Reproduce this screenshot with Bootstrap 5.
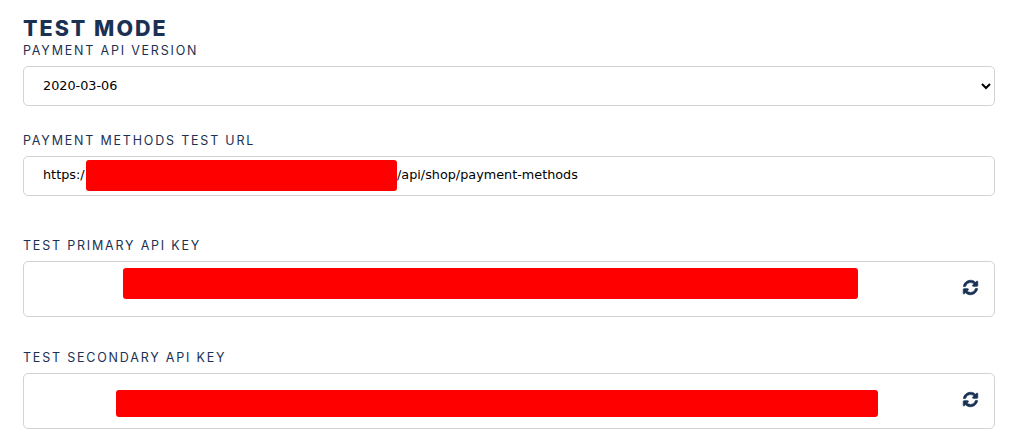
<!DOCTYPE html>
<html lang="en">
<head>
<meta charset="utf-8">
<title>Test mode</title>
<link href="https://cdn.jsdelivr.net/npm/bootstrap@5.3.0/dist/css/bootstrap.min.css" rel="stylesheet">
<style>
body { background:#fff; font-family:"DejaVu Sans",sans-serif; overflow:hidden; }
.page-wrap { padding:16px 29px 0 23px; }
.mode-title { font-family:"Inter",sans-serif; font-weight:800; font-size:21.500px; line-height:24px; letter-spacing:2px; color:#1b3154; margin:0; }
.field-label { display:block; font-family:"Inter",sans-serif; font-size:12.500px; line-height:18px; letter-spacing:1.800px; color:#1b3154; margin:0 0 6px; }
.field-box { position:relative; height:40px; border:1px solid #d3d3d3; border-radius:5px; padding:0 19px; font-size:12.800px; color:#000; background-color:#fff; box-shadow:none; }
.field-box.form-select { appearance:auto; -webkit-appearance:auto; background-image:none; padding:0 0 2px 15px; }
.field-input { line-height:36px; }
.key-box { height:56px; padding-right:16px; }
.key-icon { color:#1b3154; margin-bottom:3px; stroke:currentColor; stroke-width:24; overflow:visible; }
.mask { position:absolute; background:#f00; border-radius:3px; }
.mask-url { left:62px; top:3px; width:311px; height:31px; }
.mask-primary { left:99px; top:6px; width:735px; height:31px; }
.mask-secondary { left:92px; top:16px; width:762px; height:27px; }
.url-tail { position:absolute; left:373px; top:0; }
.first-group { margin-top:2px; height:90px; }
.second-group { height:105px; }
.third-group { height:112px; }
</style>
</head>
<body>
<div class="page-wrap">
  <h1 class="mode-title">TEST MODE</h1>
  <div class="first-group">
    <label class="field-label" for="apiVersion">PAYMENT API VERSION</label>
    <select class="form-select field-box" id="apiVersion"><option>2020-03-06</option></select>
  </div>
  <div class="second-group">
    <label class="field-label">PAYMENT METHODS TEST URL</label>
    <div class="field-box field-input">https:/<span class="mask mask-url"></span><span class="url-tail">/api/shop/payment-methods</span></div>
  </div>
  <div class="third-group">
    <label class="field-label">TEST PRIMARY API KEY</label>
    <div class="field-box key-box d-flex align-items-center justify-content-end">
      <span class="mask mask-primary"></span>
      <svg class="key-icon" width="15" height="15" viewBox="0 0 512 512" fill="currentColor" aria-hidden="true"><path d="M370.7 133.3C339.5 104 298.9 88 255.800 88c-77.500.1-144.300 53.200-162.800 126.900-1.300 5.400-6.100 9.200-11.700 9.200H24.100c-7.500 0-13.200-6.800-11.800-14.200C33.900 94.900 134.800 8 256 8c66.400 0 126.800 26.100 171.300 68.700L463 41c15.100-15.100 41-4.400 41 17v134c0 13.300-10.700 24-24 24H346c-21.400 0-32.100-25.900-17-41zM32 296h134c21.400 0 32.100 25.900 17 41l-41.800 41.800c31.300 29.300 71.800 45.300 114.900 45.200 77.400-.1 144.300-53.100 162.800-126.800 1.300-5.400 6.100-9.200 11.700-9.200h57.300c7.500 0 13.200 6.800 11.800 14.200C478.100 417.100 377.200 504 256 504c-66.400 0-126.800-26.100-171.300-68.700L49 471c-15.100 15.100-41 4.400-41-17V320c0-13.300 10.700-24 24-24z"/></svg>
    </div>
  </div>
  <div>
    <label class="field-label">TEST SECONDARY API KEY</label>
    <div class="field-box key-box d-flex align-items-center justify-content-end">
      <span class="mask mask-secondary"></span>
      <svg class="key-icon" width="15" height="15" viewBox="0 0 512 512" fill="currentColor" aria-hidden="true"><path d="M370.7 133.3C339.5 104 298.9 88 255.800 88c-77.500.1-144.300 53.200-162.800 126.900-1.300 5.400-6.100 9.200-11.700 9.200H24.100c-7.500 0-13.200-6.800-11.800-14.200C33.900 94.900 134.800 8 256 8c66.400 0 126.800 26.100 171.300 68.700L463 41c15.100-15.100 41-4.400 41 17v134c0 13.300-10.700 24-24 24H346c-21.400 0-32.100-25.900-17-41zM32 296h134c21.400 0 32.100 25.900 17 41l-41.800 41.800c31.300 29.300 71.800 45.300 114.900 45.200 77.400-.1 144.300-53.100 162.800-126.800 1.300-5.400 6.100-9.200 11.700-9.200h57.300c7.500 0 13.200 6.800 11.800 14.200C478.100 417.100 377.200 504 256 504c-66.400 0-126.800-26.100-171.300-68.700L49 471c-15.100 15.100-41 4.400-41-17V320c0-13.300 10.700-24 24-24z"/></svg>
    </div>
  </div>
</div>
<script src="https://cdn.jsdelivr.net/npm/bootstrap@5.3.0/dist/js/bootstrap.bundle.min.js"></script>
</body>
</html>
